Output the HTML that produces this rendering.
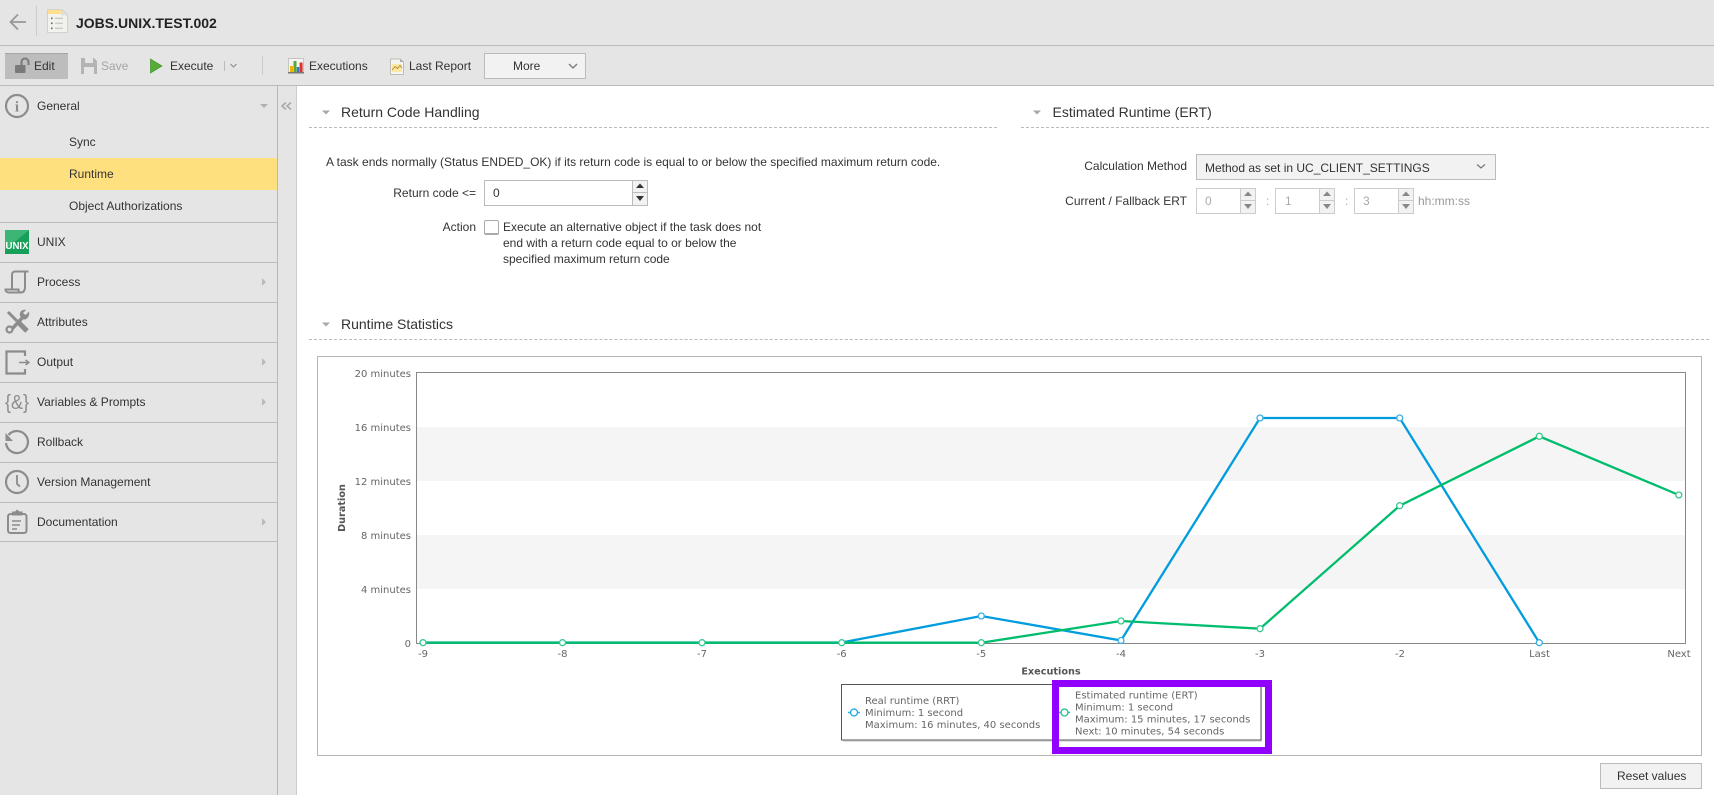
<!DOCTYPE html>
<html><head><meta charset="utf-8"><style>
html,body{margin:0;padding:0;width:1714px;height:795px;overflow:hidden;background:#fff}
body{position:relative;font-family:"Liberation Sans",Arial,sans-serif;font-size:12px;color:#333}
.t{position:absolute;white-space:nowrap;line-height:16px;height:16px}
.r{text-align:right}
.b{position:absolute;box-sizing:border-box}
.h{font-size:14px;color:#333}
svg.o{position:absolute;left:0;top:0}
</style></head><body>
<div class="b" style="left:0;top:0;width:1714px;height:86px;background:#e5e5e5;border-bottom:1px solid #bbb"></div>
<div class="b" style="left:0;top:45px;width:1714px;height:1px;background:#bbb"></div>
<div class="b" style="left:0;top:86px;width:297px;height:709px;background:#e5e5e5;border-right:1px solid #ccc"></div>
<div class="b" style="left:277px;top:86px;width:1px;height:709px;background:#b8b8b8"></div>
<div class="b" style="left:0;top:158px;width:277px;height:32px;background:#ffe07f"></div>
<div class="b" style="left:0;top:222px;width:277px;height:1px;background:#bbb"></div>
<div class="b" style="left:0;top:262px;width:277px;height:1px;background:#bbb"></div>
<div class="b" style="left:0;top:302px;width:277px;height:1px;background:#bbb"></div>
<div class="b" style="left:0;top:342px;width:277px;height:1px;background:#bbb"></div>
<div class="b" style="left:0;top:382px;width:277px;height:1px;background:#bbb"></div>
<div class="b" style="left:0;top:422px;width:277px;height:1px;background:#bbb"></div>
<div class="b" style="left:0;top:462px;width:277px;height:1px;background:#bbb"></div>
<div class="b" style="left:0;top:502px;width:277px;height:1px;background:#bbb"></div>
<div class="b" style="left:0;top:541px;width:277px;height:1px;background:#bbb"></div>

<!-- toolbar boxes -->
<div class="b" style="left:5px;top:53px;width:63px;height:26px;background:#bdbdbd;border-top:1px solid #a6a6a6"></div>
<div class="b" style="left:484px;top:53px;width:102px;height:26px;background:#f2f2f2;border:1px solid #bbb"></div>

<div class="t" style="left:76px;top:15px;font-weight:bold;font-size:14px;color:#222">JOBS.UNIX.TEST.002</div>
<div class="t" style="left:34px;top:58px;color:#333">Edit</div>
<div class="t" style="left:101px;top:58px;color:#a5a5a5">Save</div>
<div class="t" style="left:170px;top:58px">Execute</div>
<div class="t" style="left:309px;top:58px">Executions</div>
<div class="t" style="left:409px;top:58px">Last Report</div>
<div class="t" style="left:513px;top:58px">More</div>

<!-- sidebar labels -->
<div class="t" style="left:37px;top:98px">General</div>
<div class="t" style="left:69px;top:134px">Sync</div>
<div class="t" style="left:69px;top:166px">Runtime</div>
<div class="t" style="left:69px;top:198px">Object Authorizations</div>
<div class="t" style="left:37px;top:234px">UNIX</div>
<div class="t" style="left:37px;top:274px">Process</div>
<div class="t" style="left:37px;top:314px">Attributes</div>
<div class="t" style="left:37px;top:354px">Output</div>
<div class="t" style="left:37px;top:394px">Variables &amp; Prompts</div>
<div class="t" style="left:37px;top:434px">Rollback</div>
<div class="t" style="left:37px;top:474px">Version Management</div>
<div class="t" style="left:37px;top:514px">Documentation</div>

<!-- section heads -->
<div class="t h" style="left:341px;top:104px">Return Code Handling</div>
<div class="t h" style="left:1052.500px;top:104px">Estimated Runtime (ERT)</div>
<div class="t h" style="left:341px;top:316px">Runtime Statistics</div>
<div class="b" style="left:309px;top:127px;width:688px;border-top:1px dashed #bbb"></div>
<div class="b" style="left:1021px;top:127px;width:688px;border-top:1px dashed #bbb"></div>
<div class="b" style="left:309px;top:339px;width:1400px;border-top:1px dashed #bbb"></div>

<!-- return code -->
<div class="t" style="left:326px;top:154px">A task ends normally (Status ENDED_OK) if its return code is equal to or below the specified maximum return code.</div>
<div class="t r" style="left:326px;width:150px;top:185px">Return code &lt;=</div>
<div class="b" style="left:484px;top:180px;width:164px;height:26px;background:#fff;border:1px solid #bbb"></div>
<div class="b" style="left:632px;top:180px;width:16px;height:26px;background:#f2f2f2;border:1px solid #bbb"></div>
<div class="b" style="left:632px;top:192px;width:16px;height:1px;background:#bbb"></div>
<div class="t" style="left:493px;top:185px">0</div>
<div class="t r" style="left:326px;width:150px;top:219px">Action</div>
<div class="b" style="left:484px;top:220px;width:15px;height:15px;background:#fff;border:1px solid #aaa;border-bottom-width:2px;border-radius:2px"></div>
<div class="t" style="left:503px;top:219px">Execute an alternative object if the task does not</div>
<div class="t" style="left:503px;top:235px">end with a return code equal to or below the</div>
<div class="t" style="left:503px;top:251px">specified maximum return code</div>

<!-- ERT -->
<div class="t r" style="left:1000px;width:187px;top:158px">Calculation Method</div>
<div class="b" style="left:1196px;top:154px;width:300px;height:26px;background:#f2f2f2;border:1px solid #bbb"></div>
<div class="t" style="left:1205px;top:160px">Method as set in UC_CLIENT_SETTINGS</div>
<div class="t r" style="left:1000px;width:187px;top:193px">Current / Fallback ERT</div>
<div class="b" style="left:1196px;top:188px;width:60px;height:26px;border:1px solid #ccc"></div>
<div class="b" style="left:1240px;top:188px;width:16px;height:26px;background:#f2f2f2;border:1px solid #ccc"></div>
<div class="b" style="left:1240px;top:200px;width:16px;height:1px;background:#ccc"></div>
<div class="b" style="left:1275px;top:188px;width:60px;height:26px;border:1px solid #ccc"></div>
<div class="b" style="left:1319px;top:188px;width:16px;height:26px;background:#f2f2f2;border:1px solid #ccc"></div>
<div class="b" style="left:1319px;top:200px;width:16px;height:1px;background:#ccc"></div>
<div class="b" style="left:1354px;top:188px;width:60px;height:26px;border:1px solid #ccc"></div>
<div class="b" style="left:1398px;top:188px;width:16px;height:26px;background:#f2f2f2;border:1px solid #ccc"></div>
<div class="b" style="left:1398px;top:200px;width:16px;height:1px;background:#ccc"></div>
<div class="t" style="left:1205px;top:193px;color:#aaa">0</div>
<div class="t" style="left:1285px;top:193px;color:#aaa">1</div>
<div class="t" style="left:1363px;top:193px;color:#aaa">3</div>
<div class="t" style="left:1266px;top:193px;color:#aaa">:</div>
<div class="t" style="left:1345px;top:193px;color:#aaa">:</div>
<div class="t" style="left:1418px;top:193px;color:#999">hh:mm:ss</div>

<!-- chart panel -->
<div class="b" style="left:317px;top:356px;width:1385px;height:400px;border:1px solid #b5b5b5"></div>
<div class="b" style="left:1600px;top:763px;width:102px;height:26px;background:#f2f2f2;border:1px solid #bbb"></div>
<div class="t" style="left:1617px;top:768px">Reset values</div>

<svg class="o" width="1714" height="795" viewBox="0 0 1714 795" xmlns="http://www.w3.org/2000/svg">
 <!-- header icons -->
 <path d="M26 22H11M18 14.500L10.500 22L18 29.500" fill="none" stroke="#999" stroke-width="1.800"/>
 <rect x="36" y="6" width="1" height="30" fill="#ccc"/>
 <path d="M47.500 9.500H62L67.500 15V32.500H47.500Z" fill="#f3f3ee" stroke="#d2d2cc"/>
 <rect x="48" y="10" width="14" height="4" fill="#ffe08c"/>
 <path d="M62 9.500V15H67.500Z" fill="#e3e3de" stroke="#d2d2cc" stroke-width=".6"/>
 <g fill="#666"><rect x="51" y="17.500" width="1.600" height="1.600"/><rect x="51" y="22.500" width="1.600" height="1.600"/><rect x="51" y="27.500" width="1.600" height="1.600"/></g>
 <g fill="#ccc"><rect x="55" y="17.500" width="8" height="1.600"/><rect x="55" y="22.500" width="8" height="1.600"/><rect x="55" y="27.500" width="8" height="1.600"/></g>
 <!-- edit: open padlock -->
 <rect x="15" y="65" width="10.500" height="8" rx="1" fill="#7a7a7a"/>
 <path d="M21.500 65V62A3.500 3.500 0 0 1 28.500 62V65" fill="none" stroke="#7a7a7a" stroke-width="2"/>
 <!-- save -->
 <path d="M81 58H94L97 61V74H81Z" fill="#b4b4b4"/>
 <rect x="85" y="58" width="8" height="5" fill="#e5e5e5"/><rect x="84" y="67" width="10" height="7" fill="#e5e5e5"/>
 <!-- execute -->
 <path d="M150.500 59L162 66L150.500 73Z" fill="#57ab37" stroke="#3f942a" stroke-width=".7"/>
 <rect x="224" y="61" width="1" height="10" fill="#bbb"/>
 <path d="M230.500 64L233.500 67L236.500 64" fill="none" stroke="#8c8c8c" stroke-width="1.100"/>
 <rect x="262" y="56" width="1" height="19" fill="#ccc"/>
 <!-- executions icon -->
 <rect x="288.500" y="58.500" width="15" height="14.500" fill="#f4f4f4" stroke="#c4c4c4"/>
 <rect x="290" y="66" width="3" height="6" fill="#f0b400"/>
 <rect x="293.500" y="61" width="3" height="11" fill="#5aa838"/>
 <rect x="296.800" y="67" width="2.500" height="5" fill="#3a76c4"/>
 <rect x="299.600" y="62.500" width="3" height="9.500" fill="#d4372c"/>
 <rect x="288" y="72" width="16" height="1.500" fill="#777"/>
 <!-- last report -->
 <path d="M390.500 59H400L403.500 62V74.500H390.500Z" fill="#f4f4f0" stroke="#bdbdb8"/>
 <rect x="392" y="64" width="10" height="8" fill="#fbe7a6"/>
 <path d="M392 70L395 66.500L397.500 68.500L400 65.500L402 68" fill="none" stroke="#b2892a" stroke-width=".9"/>
 <path d="M400 59V62H403.500Z" fill="#aaa"/>
 <path d="M569 64L573 68L577 64" fill="none" stroke="#777" stroke-width="1.300"/>

 <!-- sidebar icons -->
 <circle cx="17" cy="106" r="11" fill="none" stroke="#8c8c8c" stroke-width="2.200"/>
 <text x="17" y="111.500" text-anchor="middle" font-family="Liberation Serif,serif" font-weight="bold" font-size="15" fill="#8c8c8c">i</text>
 <path d="M260 104H268L264 108Z" fill="#b0b0b0"/>
 <path d="M286 102.500L282 106L286 109.500M291 102.500L287 106L291 109.500" fill="none" stroke="#a8a8a8" stroke-width="1.600"/>

 <rect x="5" y="230" width="24" height="24" fill="#17a05a"/>
 <path d="M5 230H29L5 250Z" fill="#3db574"/>
 <text x="17" y="249" text-anchor="middle" font-family="Liberation Sans,sans-serif" font-weight="bold" font-size="10" fill="#fff" textLength="23" lengthAdjust="spacingAndGlyphs">UNIX</text>

 <path d="M28.500 271.500H15.500C13 271.500 12 273 12 275V290M25 272V287C25 290.500 23.500 292.500 20.500 292.500H9C6.500 292.500 5.500 291 5.500 289.500H18.500C18.500 291 19 292.500 20.500 292.500" fill="none" stroke="#8c8c8c" stroke-width="2"/>

 <path d="M8 312L17 321" stroke="#8c8c8c" stroke-width="3"/>
 <path d="M18 322L27 331" stroke="#8c8c8c" stroke-width="5"/>
 <path d="M12 329L23 317" stroke="#8c8c8c" stroke-width="3.500"/>
 <circle cx="9.500" cy="329.500" r="3" fill="none" stroke="#8c8c8c" stroke-width="2.200"/>
 <path d="M29 311.500L25.500 315L23 313L26 310C22 309 19 312 20 316L23.500 319.500C27 320 30 316 29 311.500Z" fill="#8c8c8c"/>

 <path d="M25 356V351.500H6.500V373.500H25V369" fill="none" stroke="#8c8c8c" stroke-width="2.200"/>
 <path d="M19 362.500H28M25.500 360L29 362.500L25.500 365" fill="none" stroke="#8c8c8c" stroke-width="1.400"/>

 <text x="17" y="409" text-anchor="middle" font-family="Liberation Sans,sans-serif" font-size="20" fill="#8c8c8c" textLength="24" lengthAdjust="spacingAndGlyphs">{&amp;}</text>

 <path d="M8.500 435A11 11 0 1 1 6 443" fill="none" stroke="#8c8c8c" stroke-width="2.200"/>
 <path d="M5.500 433V441H13Z" fill="#8c8c8c"/>

 <circle cx="17" cy="482" r="11" fill="none" stroke="#8c8c8c" stroke-width="2.200"/>
 <path d="M17 475V484L20 486.500" fill="none" stroke="#8c8c8c" stroke-width="1.800"/>

 <rect x="8" y="514" width="18.500" height="19" rx="2.500" fill="none" stroke="#8c8c8c" stroke-width="2"/>
 <path d="M12 514V511.500H15L17 509.500L19.500 511.500H22.500V515.500H12Z" fill="#8c8c8c"/>
 <path d="M12 521H21M12 525H20M12 529H17" stroke="#8c8c8c" stroke-width="1.500"/>

 <g fill="#bbb">
  <path d="M262 278V286L266 282Z"/><path d="M262 358V366L266 362Z"/><path d="M262 398V406L266 402Z"/><path d="M262 518V526L266 522Z"/>
 </g>

 <!-- section triangles -->
 <g fill="#a8a8a8"><path d="M322 110.500H330L326 114.500Z"/><path d="M1033 110.500H1041L1037 114.500Z"/><path d="M322 322.500H330L326 326.500Z"/></g>

 <!-- small chevrons -->
 <g fill="#333">
  <path d="M640 183.500L644 188H636Z"/><path d="M636 196H644L640 201Z"/>
 </g>
 <g fill="#888">
  <path d="M1248 191.500L1252 196H1244Z"/><path d="M1244 204H1252L1248 209Z"/>
  <path d="M1327 191.500L1331 196H1323Z"/><path d="M1323 204H1331L1327 209Z"/>
  <path d="M1406 191.500L1410 196H1402Z"/><path d="M1402 204H1410L1406 209Z"/>
 </g>
 <path d="M1477 164.500L1481 168L1485 164.500" fill="none" stroke="#777" stroke-width="1.200"/>

 <!-- chart -->
 <rect x="416.500" y="427" width="1269" height="54" fill="#f5f5f5"/>
 <rect x="416.500" y="535" width="1269" height="54" fill="#f5f5f5"/>
 <path d="M416.500 643.500V372.500H1685.500V643.500Z" fill="none" stroke="#888"/>
 <g font-family="DejaVu Sans,sans-serif" font-size="10" fill="#666">
  <g text-anchor="end">
   <text x="411" y="377">20 minutes</text><text x="411" y="431">16 minutes</text><text x="411" y="485">12 minutes</text>
   <text x="411" y="539">8 minutes</text><text x="411" y="593">4 minutes</text><text x="411" y="647">0</text>
  </g>
  <g text-anchor="middle">
   <text x="423" y="657">-9</text><text x="562.500" y="657">-8</text><text x="702" y="657">-7</text><text x="841.700" y="657">-6</text>
   <text x="981.300" y="657">-5</text><text x="1121" y="657">-4</text><text x="1260" y="657">-3</text><text x="1400" y="657">-2</text>
   <text x="1539.500" y="657">Last</text><text x="1679" y="657">Next</text>
  </g>
  <text x="1051" y="674.500" text-anchor="middle" font-weight="bold" font-size="9.700" fill="#555">Executions</text>
  <text transform="translate(345,508) rotate(-90)" text-anchor="middle" font-weight="bold" font-size="9.700" fill="#555">Duration</text>
 </g>
 <polyline fill="none" stroke="#009cde" stroke-width="2.300" points="423,642.500 562.500,642.500 702,642.500 841.700,642.500 981.300,616 1121,640.500 1260,418 1399.700,418 1539.300,642.700"/>
 <polyline fill="none" stroke="#00bd6e" stroke-width="2.300" points="423,642.700 562.500,642.700 702,642.700 841.700,642.700 981.300,642.700 1121,621 1260,628.700 1399.700,505.700 1539.300,436.300 1678.800,495"/>
 <g fill="#fff" stroke="#37afe3" stroke-width="1.300">
  <circle cx="981.300" cy="616" r="3"/><circle cx="1121" cy="640.500" r="3"/><circle cx="1260" cy="418" r="3"/><circle cx="1399.700" cy="418" r="3"/><circle cx="1539.300" cy="642.700" r="3"/>
 </g>
 <g fill="#fff" stroke="#37c88e" stroke-width="1.300">
  <circle cx="423" cy="642.700" r="3"/><circle cx="562.500" cy="642.700" r="3"/><circle cx="702" cy="642.700" r="3"/><circle cx="841.700" cy="642.700" r="3"/><circle cx="981.300" cy="642.700" r="3"/>
  <circle cx="1121" cy="621" r="3"/><circle cx="1260" cy="628.700" r="3"/><circle cx="1399.700" cy="505.700" r="3"/><circle cx="1539.300" cy="436.300" r="3"/><circle cx="1678.800" cy="495" r="3"/>
 </g>

 <!-- legend -->
 <rect x="843" y="686" width="419" height="56" fill="#ccc" opacity=".6"/>
 <rect x="841.500" y="684.500" width="419.500" height="55.500" fill="#fff" stroke="#555"/>
 <path d="M848 712.500H860" stroke="#37afe3" stroke-width="1.500"/>
 <path d="M1059 712.500H1070" stroke="#37c88e" stroke-width="1.500"/>
 <circle cx="854" cy="712.500" r="3.500" fill="#fff" stroke="#1ba6e0" stroke-width="1.300"/>
 <circle cx="1064.500" cy="712.500" r="3.500" fill="#fff" stroke="#1cc083" stroke-width="1.300"/>
 <g font-family="DejaVu Sans,sans-serif" font-size="10" fill="#666">
  <text x="865" y="704">Real runtime (RRT)</text>
  <text x="865" y="716">Minimum: 1 second</text>
  <text x="865" y="728">Maximum: 16 minutes, 40 seconds</text>
  <text x="1075" y="698.500">Estimated runtime (ERT)</text>
  <text x="1075" y="710.500">Minimum: 1 second</text>
  <text x="1075" y="722.500">Maximum: 15 minutes, 17 seconds</text>
  <text x="1075" y="734.500">Next: 10 minutes, 54 seconds</text>
 </g>
 <rect x="1055.500" y="683.500" width="213" height="67" fill="none" stroke="#9000ff" stroke-width="7"/>
</svg>
</body></html>
